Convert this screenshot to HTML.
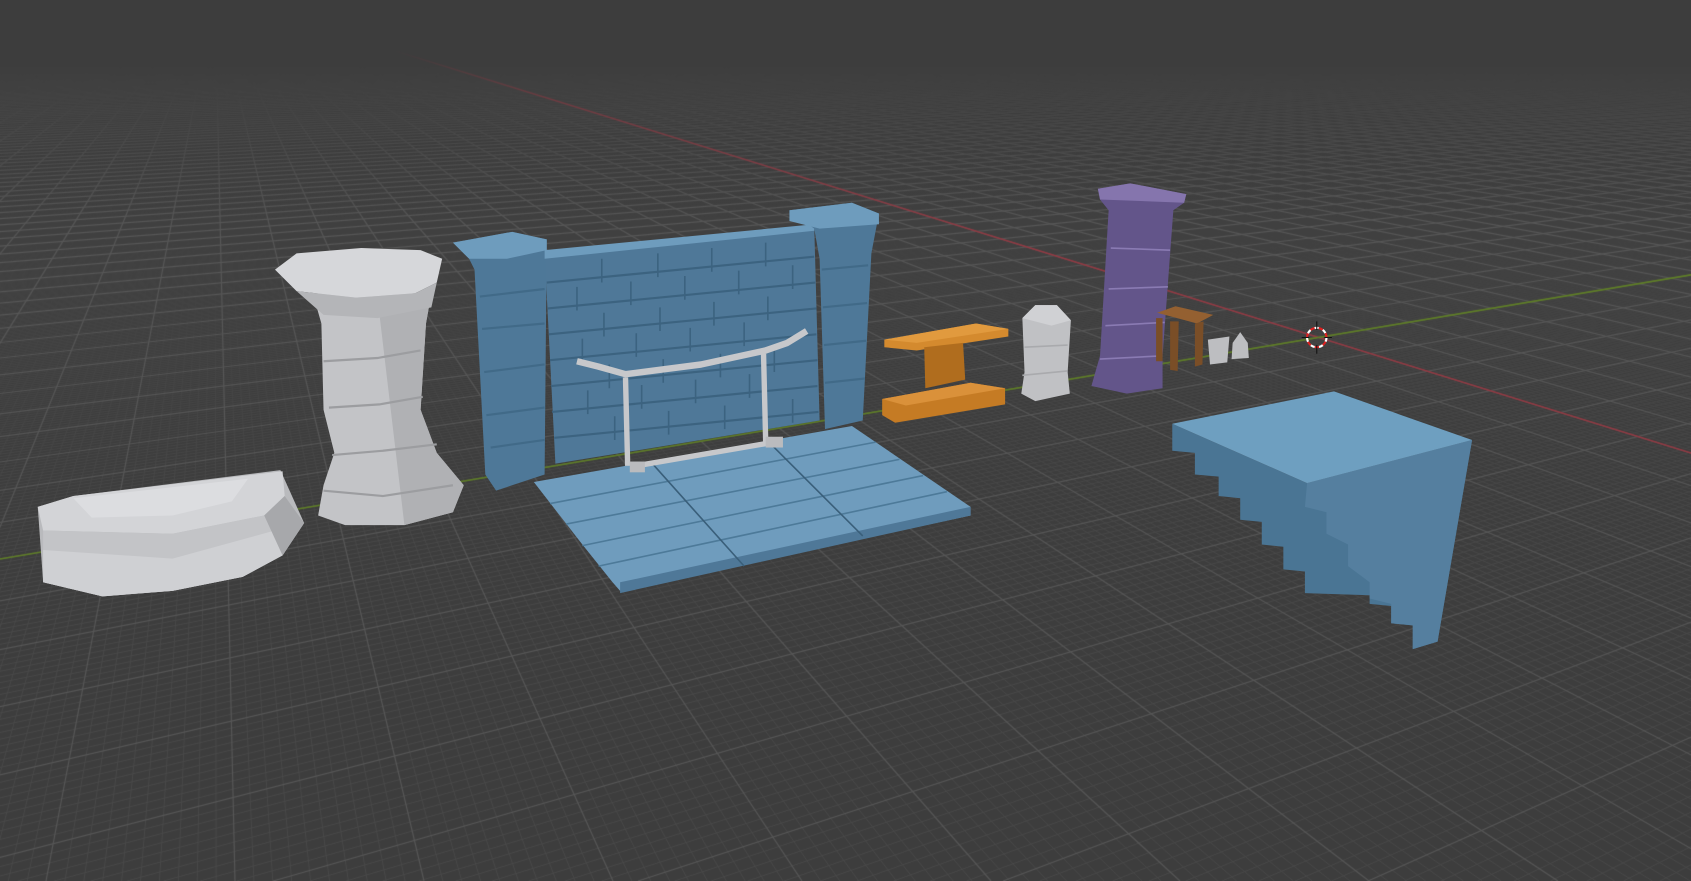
<!DOCTYPE html>
<html><head><meta charset="utf-8"><style>
html,body{margin:0;padding:0;background:#3d3d3d;overflow:hidden}
#c{position:absolute;left:0;top:0}
#s{position:absolute;left:0;top:0}
</style></head><body>
<canvas id="c" width="1691" height="881"></canvas>
<svg id="s" width="1691" height="881" viewBox="0 0 1691 881">
<g transform="scale(1.07844,1.07834)">
<polygon points="35,470 68,460 260,436 282,485 262,515 225,535 160,548 95,553 40,540" fill="#b9babd"/>
<polygon points="35,470 68,460 262,437 264,460 245,478 160,495 40,492" fill="#d3d4d7"/>
<polygon points="40,492 160,495 245,478 264,460 282,485 262,515 225,535 160,548 95,553 40,540" fill="#c3c4c7"/>
<polygon points="40,510 160,518 262,490 262,515 225,535 160,548 95,553 40,540" fill="#cfd0d3"/>
<polygon points="68,462 230,444 215,465 160,478 85,480" fill="#dcdde0"/>
<polygon points="245,478 264,460 282,485 262,515" fill="#a7a8ab"/>
<polygon points="290,272 400,272 395,300 390,380 405,420 430,450 420,475 375,487 320,487 295,478 300,450 310,420 300,380 298,300" fill="#c3c4c7"/>
<polygon points="350,276 400,272 395,300 390,380 405,420 430,450 420,475 375,487" fill="#b0b1b4"/>
<polygon points="255,250 275,235 335,230 390,232 410,240 405,262 385,272 330,276 275,270" fill="#d6d7da"/>
<polygon points="275,270 330,276 385,272 405,262 400,285 350,295 300,292" fill="#b4b5b8"/>
<path d="M300,335 L350,332 L390,325 M305,378 L352,375 L392,368 M308,422 L355,418 L405,412 M300,455 L355,460 L420,450" stroke="#9c9da0" stroke-width="2" fill="none"/>
<polygon points="420,225 475,215 507,222 505,440 460,455 450,440 440,250 435,240" fill="#4e7898"/>
<polygon points="420,225 475,215 507,222 507,232 470,240 435,240" fill="#6e9cbd"/>
<path d="M445,275 L505,268 M447,305 L505,300 M449,345 L505,338 M451,385 L505,378 M455,415 L505,408" stroke="#416a88" stroke-width="2"/>
<polygon points="505,235 755,210 760,390 515,430" fill="#4f7898"/>
<polygon points="505,232 755,208 755,214 505,240" fill="#6e9cbd"/>
<path d="M507,262 L755,238 M508,286 L756,262 M509,310 L757,286 M510,334 L757,310 M511,358 L758,334 M512,382 L758,358 M514,406 L759,382" stroke="#3c6380" stroke-width="2"/>
<path d="M558,240 L558,262 M610,235 L610,257 M660,230 L660,252 M710,225 L710,247 M535,266 L535,288 M585,261 L585,283 M635,256 L635,278 M685,251 L685,273 M735,246 L735,268 M560,290 L560,312 M612,285 L612,307 M662,280 L662,302 M712,275 L712,297 M540,314 L540,336 M590,309 L590,331 M640,304 L640,326 M690,299 L690,321 M565,338 L565,360 M615,333 L615,355 M668,328 L668,350 M718,323 L718,345 M545,362 L545,384 M595,357 L595,379 M645,352 L645,374 M695,347 L695,369 M570,386 L570,408 M620,381 L620,403 M672,376 L672,398 M735,370 L735,392" stroke="#3c6380" stroke-width="1.5"/>
<polygon points="732,195 790,188 815,198 808,235 800,390 765,398 760,240 755,212" fill="#4e7898"/>
<polygon points="732,195 790,188 815,198 815,208 760,212 732,205" fill="#6e9cbd"/>
<path d="M762,250 L805,246 M763,285 L804,281 M764,320 L803,316 M765,355 L802,351" stroke="#416a88" stroke-width="2"/>
<polygon points="495,447 790,395 900,470 900,478 575,548 568,540 540,505" fill="#6f9cbd"/>
<polygon points="575,540 900,470 900,478 575,550" fill="#4f7898"/>
<path d="M510,467 L812,410 M525,486 L834,426 M540,506 L856,441 M555,525 L878,456" stroke="#4d7a99" stroke-width="1.5"/>
<path d="M605,430 L690,525 M715,412 L800,497" stroke="#3a5f7a" stroke-width="1.5"/>
<path d="M535,335 L555,340 L580,347 L650,338 L710,325 L730,318 L748,307" stroke="#c7c8cb" stroke-width="6" fill="none" stroke-linejoin="round"/>
<path d="M580,350 L582,432 M708,328 L710,410 M590,432 L718,410" stroke="#c7c8cb" stroke-width="5" fill="none"/>
<rect x="584" y="428" width="14" height="10" fill="#babbbe"/><rect x="710" y="405" width="16" height="10" fill="#babbbe"/>
<polygon points="820,315 905,300 935,305 935,312 850,325 820,322" fill="#d48a2e"/>
<polygon points="820,315 905,300 935,305 850,318" fill="#e19a3e"/>
<polygon points="857,322 893,318 895,352 858,360" fill="#b06d1e"/>
<polygon points="818,370 900,355 932,360 932,375 830,392 818,385" fill="#c57b24"/>
<polygon points="818,370 900,355 932,360 840,376" fill="#da913a"/>
<polygon points="948,295 960,283 980,283 993,297 990,345 992,365 960,372 947,365 950,345" fill="#c0c1c4"/>
<polygon points="948,295 960,283 980,283 993,297 975,302" fill="#d0d1d4"/>
<path d="M950,322 L990,320 M948,348 L990,344" stroke="#a9aaad" stroke-width="1.5"/>
<polygon points="1018,175 1048,170 1100,180 1098,188 1088,195 1078,330 1078,360 1045,365 1012,358 1020,330 1028,195 1020,185" fill="#63558a"/>
<polygon points="1018,175 1048,170 1100,180 1098,188 1020,185" fill="#8575ad"/>
<path d="M1030,230 L1085,232 M1028,268 L1083,266 M1025,302 L1080,299 M1020,333 L1078,330" stroke="#8a7bb3" stroke-width="1.5"/>
<polygon points="1073,290 1090,284 1125,292 1110,300" fill="#946031"/>
<rect x="1072" y="295" width="6" height="40" fill="#7a4e27"/>
<polygon points="1085,298 1093,298 1092,344 1085,343" fill="#7a4e27"/>
<polygon points="1108,300 1116,298 1115,338 1108,340" fill="#7a4e27"/>
<path d="M1120,315 L1140,312 L1138,336 L1122,338 Z" fill="#bdbec1"/>
<path d="M1143,318 L1150,308 L1157,318 L1158,332 L1142,333 Z" fill="#bdbec1"/>
<circle cx="1221" cy="313" r="9" fill="none" stroke="#fff" stroke-width="2" stroke-dasharray="4 4"/>
<circle cx="1221" cy="313" r="9" fill="none" stroke="#e02020" stroke-width="2" stroke-dasharray="4 4" stroke-dashoffset="4"/>
<path d="M1221,298 V306 M1221,320 V328 M1207,313 H1214 M1228,313 H1235" stroke="#111" stroke-width="1"/>
<polygon points="1087,393 1087,418 1108,420 1108,440 1130,442 1130,460 1150,462 1150,482 1170,484 1170,505 1190,507 1190,528 1210,530 1210,550 1270,552 1270,560 1290,562 1290,578 1310,580 1310,602 1333,595 1365,408 1212,448" fill="#4a7594"/>
<polygon points="1212,448 1365,408 1333,595 1310,602 1310,580 1290,578 1290,560 1270,555 1270,540 1250,525 1250,505 1230,495 1230,475 1210,470" fill="#557f9f"/>
<polygon points="1087,393 1237,363 1365,408 1212,448" fill="#6e9fc0"/>
</g>
</svg>
<script>
var c=document.getElementById('c'),x=c.getContext('2d');
x.fillStyle='#3d3d3d';x.fillRect(0,0,1691,881);
var VR=[215,-5],VG=[3357,-5],Y=881;
function fam(v,anchor,step,kmin,kmax,skipEvery){
 for(var k=kmin;k<=kmax;k++){
  if(skipEvery&&(k%skipEvery===0))continue;
  var b=anchor+k*step;
  x.beginPath();x.moveTo(v[0],v[1]);x.lineTo(b,Y);x.stroke();
 }
}
x.lineWidth=1;
x.strokeStyle='#494949';
fam(VR,3070,18.9,-400,1500,10);
fam(VG,-1917,36.5,-1600,150,10);
var g=x.createLinearGradient(0,0,0,881);
g.addColorStop(0,'rgba(61,61,61,1)');g.addColorStop(0.12,'rgba(61,61,61,1)');g.addColorStop(0.4,'rgba(61,61,61,0.35)');g.addColorStop(0.65,'rgba(61,61,61,0)');
x.fillStyle=g;x.fillRect(0,0,1691,881);
x.strokeStyle='#575757';x.lineWidth=1.2;
fam(VR,3070,189,-40,150,0);
fam(VG,-1917,365,-160,15,0);
var g2=x.createLinearGradient(0,0,0,881);
g2.addColorStop(0,'rgba(61,61,61,1)');g2.addColorStop(0.07,'rgba(61,61,61,1)');g2.addColorStop(0.25,'rgba(61,61,61,0)');
x.fillStyle=g2;x.fillRect(0,0,1691,881);
x.lineWidth=1.5;
var gr=x.createLinearGradient(0,50,0,250);
gr.addColorStop(0,'rgba(140,54,64,0)');gr.addColorStop(0.25,'rgba(140,54,64,0.6)');gr.addColorStop(1,'rgba(150,56,66,1)');
x.strokeStyle=gr;x.beginPath();x.moveTo(VR[0],VR[1]);x.lineTo(3070,Y);x.stroke();
x.strokeStyle='#5f7f26';x.beginPath();x.moveTo(VG[0],VG[1]);x.lineTo(-1917,Y);x.stroke();
</script>
</body></html>
